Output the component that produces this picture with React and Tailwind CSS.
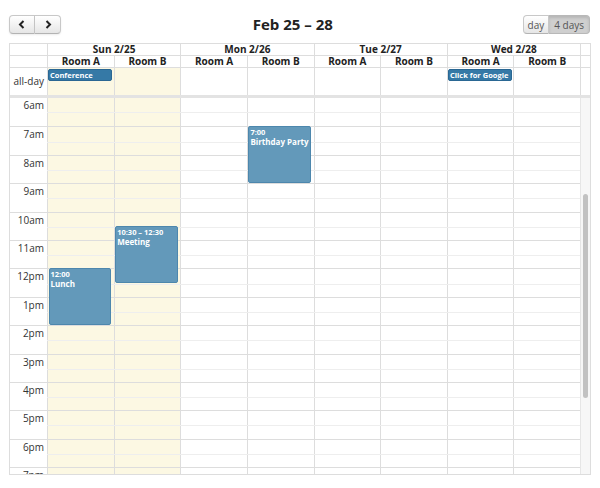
import React from 'react';

const days = [
  { label: 'Sun 2/25', today: true },
  { label: 'Mon 2/26' },
  { label: 'Tue 2/27' },
  { label: 'Wed 2/28' },
];

const hours = ['6am', '7am', '8am', '9am', '10am', '11am', '12pm', '1pm', '2pm', '3pm', '4pm', '5pm', '6pm', '7pm'];

const HOUR = 28.4;
const COL = 533 / 8;

// timed events: col index, start hour offset from 6am, duration in hours
const events = [
  { col: 3, start: 1, dur: 2, time: '7:00', title: 'Birthday Party' },
  { col: 1, start: 4.5, dur: 2, time: '10:30 – 12:30', title: 'Meeting' },
  { col: 0, start: 6, dur: 2, time: '12:00', title: 'Lunch' },
];

const Chevron = ({ dir }) => (
  <svg width="8" height="9" viewBox="0 0 8 9">
    <polyline
      points={dir === 'left' ? '5.5,1 2,4.5 5.5,8' : '2.5,1 6,4.5 2.5,8'}
      fill="none"
      stroke="#222"
      strokeWidth="2"
    />
  </svg>
);

const App = () => {
  const cols = days.flatMap(d => [
    { room: 'Room A', today: d.today },
    { room: 'Room B', today: d.today },
  ]);

  return (
    <div className="w-[600px] h-[488px] bg-white text-[#333]" style={{ fontFamily: '"Open Sans", "DejaVu Sans", sans-serif' }}>
      {/* toolbar */}
      <div className="flex items-start justify-between pl-[9px] pr-[10px] pt-[15px] h-[43px]">
        <div className="flex">
          <button className="w-[26px] h-[19px] flex items-center justify-center border border-[#c8c8c8] border-b-[#b3b3b3] rounded-l-[4px] bg-gradient-to-b from-white to-[#e6e6e6] shadow-[0_1px_2px_rgba(0,0,0,0.08)]">
            <Chevron dir="left" />
          </button>
          <button className="w-[26px] h-[19px] flex items-center justify-center border border-l-0 border-[#c8c8c8] border-b-[#b3b3b3] rounded-r-[4px] bg-gradient-to-b from-white to-[#e6e6e6] shadow-[0_1px_2px_rgba(0,0,0,0.08)]">
            <Chevron dir="right" />
          </button>
        </div>
        <div className="text-[15px] font-bold text-[#222] leading-[19px] pl-[2px]">Feb 25 – 28</div>
        <div className="flex">
          <button className="h-[19px] px-[4px] text-[10px] text-[#555] border border-[#c8c8c8] border-b-[#b3b3b3] rounded-l-[4px] bg-gradient-to-b from-white to-[#e6e6e6] leading-none">day</button>
          <button className="h-[19px] px-[5px] text-[10px] text-[#555] border border-l-0 border-[#b8b8b8] rounded-r-[4px] bg-[#cfcfcf] shadow-[inset_0_2px_3px_rgba(0,0,0,0.12)] leading-none">4 days</button>
        </div>
      </div>

      {/* calendar table */}
      <div className="ml-[9px] w-[582px] border border-[#ddd]">
        {/* day header */}
        <div className="flex h-[12px] border-b border-[#ddd]">
          <div className="w-[37px]" />
          <div className="flex-1 grid grid-cols-4">
            {days.map(d => (
              <div key={d.label} className="border-l border-[#ddd] text-center text-[10px] font-bold leading-[11px] text-[#222]">{d.label}</div>
            ))}
          </div>
          <div className="w-[10px] border-l border-[#ddd]" />
        </div>
        {/* room header */}
        <div className="flex h-[12px] border-b border-[#ddd]">
          <div className="w-[37px]" />
          <div className="flex-1 grid grid-cols-8">
            {cols.map((c, i) => (
              <div key={i} className="border-l border-[#ddd] text-center text-[10px] font-bold leading-[11px] text-[#222]">{c.room}</div>
            ))}
          </div>
          <div className="w-[10px] border-l border-[#ddd]" />
        </div>
        {/* all-day row */}
        <div className="flex h-[27px]">
          <div className="w-[37px] flex items-center justify-end pr-[3px] text-[10px] text-[#333]">all-day</div>
          <div className="flex-1 grid grid-cols-8 relative">
            {cols.map((c, i) => (
              <div key={i} className={`border-l border-[#ddd] ${c.today ? 'bg-[#fcf8e3]' : ''}`} />
            ))}
            <div className="absolute left-[1px] top-[1px] w-[64px] h-[12px] bg-[#3579a6] border border-[#2a6793] rounded-[2px] text-white text-[7.5px] font-bold leading-[10px] px-[1px] overflow-hidden whitespace-nowrap">Conference</div>
            <div className="absolute left-[401px] top-[1px] w-[64px] h-[12px] bg-[#3579a6] border border-[#2a6793] rounded-[2px] text-white text-[7.5px] font-bold leading-[10px] px-[1px] overflow-hidden whitespace-nowrap">Click for Google</div>
          </div>
          <div className="w-[10px] border-l border-[#ddd]" />
        </div>
        <div className="h-[3px] bg-[#e3e3e3]" />

        {/* time body */}
        <div className="flex h-[376px] overflow-hidden">
          <div className="flex-1 relative overflow-hidden">
            <div className="flex h-full">
              <div className="w-[37px]" />
              <div className="flex-1 grid grid-cols-8">
                {cols.map((c, i) => (
                  <div key={i} className={`border-l border-[#ddd] ${c.today ? 'bg-[#fcf8e3]' : ''}`} />
                ))}
              </div>
            </div>
            {/* slot lines */}
            <div className="absolute inset-0">
              {hours.map((h, i) => (
                <div key={h} className={`h-[28.4px] ${i > 0 ? 'border-t border-[#ddd]' : ''}`}>
                  <div className="flex h-[14.2px]">
                    <div className="w-[37px] text-right pr-[3px] text-[10px] leading-[14px] text-[#333]">{h}</div>
                  </div>
                  <div className="ml-[37px] border-t border-[#eeeeee]" />
                </div>
              ))}
            </div>
            {/* events */}
            {events.map(e => (
              <div
                key={e.title}
                className="absolute bg-[#6399ba] border border-[#4d87ad] rounded-[2px] text-white px-[1px] overflow-hidden"
                style={{
                  left: 37 + e.col * COL + 1.5,
                  width: COL - 4,
                  top: e.start * HOUR,
                  height: e.dur * HOUR,
                }}
              >
                <div className="text-[7.5px] font-bold leading-[10px] whitespace-nowrap">{e.time}</div>
                <div className="text-[8px] font-bold leading-[10px] whitespace-nowrap">{e.title}</div>
              </div>
            ))}
          </div>
          {/* scrollbar */}
          <div className="w-[10px] border-l border-[#e6e6e6] bg-[#f7f7f7] pt-[96px]">
            <div className="ml-[2px] w-[5px] h-[204px] rounded-full bg-[#c2c2c2]" />
          </div>
        </div>
      </div>
    </div>
  );
};

export default App;
